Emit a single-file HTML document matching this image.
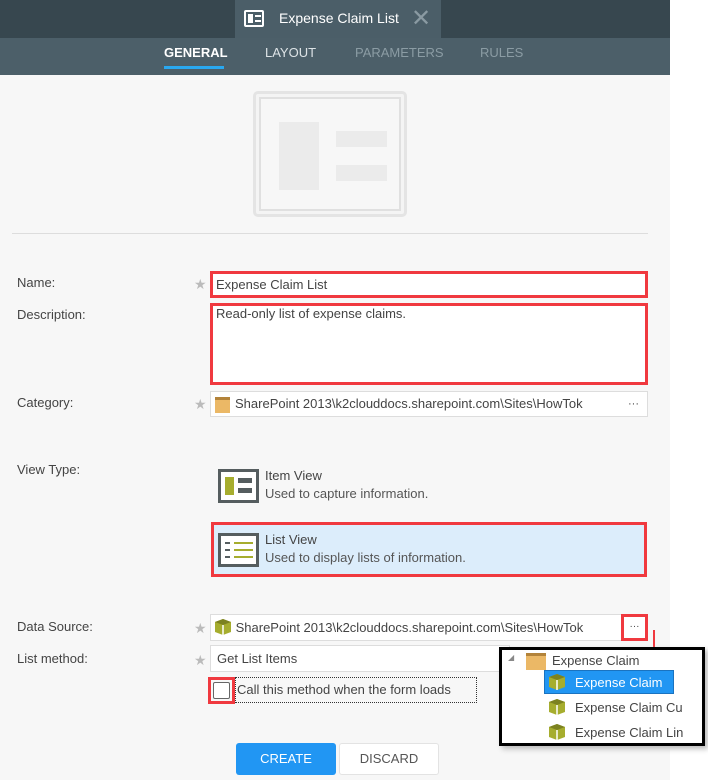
<!DOCTYPE html>
<html><head><style>
*{margin:0;padding:0;box-sizing:border-box}
body{width:708px;height:780px;position:relative;background:#fff;font-family:"Liberation Sans",sans-serif;font-size:13px;color:#444;overflow:hidden}
.a{position:absolute}
.lbl{position:absolute;left:17px;font-size:13px;color:#444}
.star{position:absolute;left:194px;color:#bbb;font-size:14px}
.f{position:absolute;background:#fff;border:1px solid #ddd;padding-left:5px;font-size:13px;color:#444;white-space:nowrap;overflow:hidden}
.red{border:3px solid #f0393f}
.cube{display:inline-block;width:18px;height:18px;vertical-align:middle}
</style></head><body>
<div class="a" style="left:0;top:0;width:670px;height:780px;background:#f7f7f7"></div>
<div class="a" style="left:0;top:0;width:670px;height:38px;background:#37474f"></div>
<div class="a" style="left:235px;top:0;width:206px;height:38px;background:#4b5e68"></div>
<div class="a" style="left:244px;top:10px;width:20px;height:17px;border:2px solid #fff;border-radius:2px"><div class="a" style="left:2px;top:2px;width:5px;height:9px;background:#fff"></div><div class="a" style="left:9px;top:3px;width:6px;height:2px;background:#fff"></div><div class="a" style="left:9px;top:8px;width:6px;height:2px;background:#fff"></div></div>
<div class="a" style="left:279px;top:10px;color:#fff;font-size:14px">Expense Claim List</div>
<div class="a" style="left:411px;top:4px;color:#8a9aa2;font-size:24px">✕</div>
<div class="a" style="left:0;top:38px;width:670px;height:37px;background:#4c5f69"></div>
<div class="a" style="left:164px;top:45px;color:#fff;font-size:13px;font-weight:bold">GENERAL</div>
<div class="a" style="left:164px;top:66px;width:60px;height:3px;background:#29a8f0"></div>
<div class="a" style="left:265px;top:45px;color:#dde3e6;font-size:13px">LAYOUT</div>
<div class="a" style="left:355px;top:45px;color:#8b9ca4;font-size:13px">PARAMETERS</div>
<div class="a" style="left:480px;top:45px;color:#8b9ca4;font-size:13px">RULES</div>
<div class="a" style="left:253px;top:91px;width:154px;height:126px;border:3px solid #e4e4e4;border-radius:5px;background:#f4f4f4"><div class="a" style="left:3px;top:3px;width:142px;height:114px;border:2px solid #e0e0e0;background:#f7f7f7"></div>
<div class="a" style="left:23px;top:28px;width:40px;height:68px;background:#ebebeb"></div>
<div class="a" style="left:80px;top:37px;width:51px;height:16px;background:#ebebeb"></div>
<div class="a" style="left:80px;top:71px;width:51px;height:16px;background:#ebebeb"></div></div>
<div class="a" style="left:12px;top:233px;width:636px;height:1px;background:#ddd"></div>

<div class="lbl" style="top:275px">Name:</div><div class="star" style="top:276px">★</div>
<div class="f red" style="left:210px;top:271px;width:438px;height:27px;line-height:21px;padding-left:3px">Expense Claim List</div>
<div class="lbl" style="top:307px">Description:</div>
<div class="f red" style="left:210px;top:303px;width:438px;height:82px;line-height:16px;padding-left:3px">Read-only list of expense claims.</div>
<div class="lbl" style="top:395px">Category:</div><div class="star" style="top:396px">★</div>
<div class="f" style="left:210px;top:391px;width:438px;height:26px;line-height:24px;padding-left:4px"><span class="a" style="left:4px;top:5px;width:15px;height:16px;background:#ebb866;border-top:3px solid #b3833a"></span><span style="margin-left:20px">SharePoint 2013\k2clouddocs.sharepoint.com\Sites\HowTok</span><span class="a" style="right:8px;top:0;font-size:11px">···</span></div>

<div class="lbl" style="top:462px">View Type:</div>
<div class="a" style="left:218px;top:469px;width:41px;height:34px;border:3px solid #555d5f;background:#fff"><div class="a" style="left:4px;top:5px;width:9px;height:18px;background:#a6ad2e"></div><div class="a" style="left:17px;top:6px;width:14px;height:5px;background:#555d5f"></div><div class="a" style="left:17px;top:16px;width:14px;height:5px;background:#555d5f"></div></div>
<div class="a" style="left:265px;top:468px;font-size:13px;color:#444">Item View</div>
<div class="a" style="left:265px;top:486px;font-size:13px;color:#555">Used to capture information.</div>
<div class="a red" style="left:211px;top:522px;width:436px;height:55px;background:#dcedfb"></div>
<div class="a" style="left:218px;top:533px;width:41px;height:34px;border:3px solid #555d5f;background:#fff"><div class="a" style="left:4px;top:6px;width:5px;height:2px;background:#555d5f"></div><div class="a" style="left:4px;top:13px;width:5px;height:2px;background:#555d5f"></div><div class="a" style="left:4px;top:20px;width:5px;height:2px;background:#555d5f"></div><div class="a" style="left:13px;top:6px;width:19px;height:2px;background:#a6ad2e"></div><div class="a" style="left:13px;top:13px;width:19px;height:2px;background:#a6ad2e"></div><div class="a" style="left:13px;top:20px;width:19px;height:2px;background:#a6ad2e"></div></div>
<div class="a" style="left:265px;top:532px;font-size:13px;color:#444">List View</div>
<div class="a" style="left:265px;top:550px;font-size:13px;color:#555">Used to display lists of information.</div>

<div class="lbl" style="top:619px">Data Source:</div><div class="star" style="top:620px">★</div>
<div class="f" style="left:210px;top:614px;width:412px;height:27px;line-height:25px;padding-left:3px"><svg class="cube" style="margin-top:-3px" viewBox="0 0 18 18"><path d="M9 1L17 4V14L9 17L1 14V4Z" fill="#a6ad2e"/><path d="M1 4L9 7L17 4L9 1Z" fill="#7c8220"/><path d="M9 7V17" stroke="#fff" stroke-width="1.5"/></svg> SharePoint 2013\k2clouddocs.sharepoint.com\Sites\HowTok</div>
<div class="a red" style="left:621px;top:614px;width:27px;height:27px;background:#fff;font-size:10px;text-align:center;line-height:20px">···</div>
<div class="a" style="left:653px;top:630px;width:2px;height:24px;background:#f0393f"></div>
<div class="a" style="left:648px;top:653px;width:0;height:0;border-left:6px solid transparent;border-right:6px solid transparent;border-top:10px solid #f0393f"></div>
<div class="lbl" style="top:651px">List method:</div><div class="star" style="top:652px">★</div>
<div class="f" style="left:210px;top:645px;width:300px;height:27px;line-height:25px;padding-left:6px">Get List Items</div>
<div class="a red" style="left:208px;top:677px;width:27px;height:27px;"><div class="a" style="left:2px;top:2px;width:17px;height:17px;border:1px solid #666;background:#fff;border-radius:2px"></div></div>
<div class="a" style="left:235px;top:677px;width:242px;height:26px;border:1px dotted #333;line-height:24px;padding-left:1px;font-size:13px">Call this method when the form loads</div>

<div class="a" style="left:499px;top:647px;width:206px;height:99px;border:3px solid #000;background:#fff;box-shadow:3px 3px 5px #bbb;overflow:hidden">
<div class="a" style="left:6px;top:3px;color:#888;font-size:8px">◢</div>
<div class="a" style="left:24px;top:3px;width:20px;height:17px;background:#ebb866;border-top:3px solid #b3833a"></div>
<div class="a" style="left:50px;top:3px;font-size:13px">Expense Claim</div>
<div class="a" style="left:42px;top:20px;width:130px;height:24px;background:#2196f3;border:1px solid #1a73c0"></div>
<svg class="a" style="left:46px;top:23px" width="18" height="18" viewBox="0 0 18 18"><path d="M9 1L17 4V14L9 17L1 14V4Z" fill="#a6ad2e"/><path d="M1 4L9 7L17 4L9 1Z" fill="#7c8220"/><path d="M9 7V17" stroke="#fff" stroke-width="1.5"/></svg>
<div class="a" style="left:73px;top:25px;font-size:13px;color:#fff">Expense Claim</div>
<svg class="a" style="left:46px;top:48px" width="18" height="18" viewBox="0 0 18 18"><path d="M9 1L17 4V14L9 17L1 14V4Z" fill="#a6ad2e"/><path d="M1 4L9 7L17 4L9 1Z" fill="#7c8220"/><path d="M9 7V17" stroke="#fff" stroke-width="1.5"/></svg>
<div class="a" style="left:73px;top:50px;font-size:13px;white-space:nowrap">Expense Claim Cu</div>
<svg class="a" style="left:46px;top:73px" width="18" height="18" viewBox="0 0 18 18"><path d="M9 1L17 4V14L9 17L1 14V4Z" fill="#a6ad2e"/><path d="M1 4L9 7L17 4L9 1Z" fill="#7c8220"/><path d="M9 7V17" stroke="#fff" stroke-width="1.5"/></svg>
<div class="a" style="left:73px;top:75px;font-size:13px;white-space:nowrap">Expense Claim Lin</div>
</div>

<div class="a" style="left:236px;top:743px;width:100px;height:32px;background:#2196f3;border-radius:3px;color:#fff;text-align:center;line-height:32px;font-size:13px">CREATE</div>
<div class="a" style="left:339px;top:743px;width:100px;height:32px;background:#fff;border:1px solid #e3e3e3;border-radius:3px;color:#555;text-align:center;line-height:30px;font-size:13px">DISCARD</div>
</body></html>
